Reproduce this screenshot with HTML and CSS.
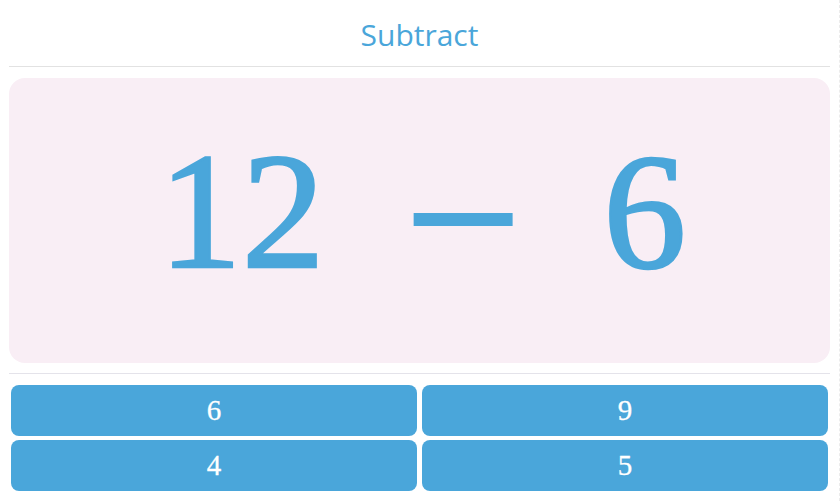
FILE: index.html
```html
<!DOCTYPE html>
<html lang="en">
<head>
<meta charset="utf-8">
<title>Subtract</title>
<link rel="stylesheet" href="styles.css">
</head>
<body>
<div class="page">
  <div class="app">
    <header class="header"><h1 class="title">Subtract</h1></header>
    <section class="problem">
      <span class="term">12</span>
      <span class="op">−</span>
      <span class="term six">6</span>
    </section>
    <hr class="divider">
    <section class="answers">
      <button class="answer">6</button>
      <button class="answer">9</button>
      <button class="answer">4</button>
      <button class="answer">5</button>
    </section>
  </div>
</div>
</body>
</html>
```
FILE: styles.css
```css
html, body {
  margin: 0;
  padding: 0;
  background: #ffffff;
}
.page {
  width: 839px;
  height: 501px;
  border-right: 1px dashed #ececec;
  overflow: hidden;
}
.app {
  width: 821px;
  margin-left: 9px;
}
.header {
  padding-top: 14px;
  padding-bottom: 11px;
  border-bottom: 1px solid #e2e2e2;
  text-align: center;
}
.title {
  margin: 0;
  font-family: "Open Sans", sans-serif;
  font-weight: 400;
  font-size: 30px;
  line-height: 41px;
  color: #4aa6da;
}
.problem {
  margin-top: 11px;
  height: 285px;
  box-sizing: border-box;
  padding-top: 50px;
  padding-left: 6px;
  background: #f9eef5;
  border-radius: 16px;
  display: flex;
  justify-content: center;
  align-items: flex-start;
  gap: 72px;
  color: #4aa6da;
}
.term {
  font-family: "Liberation Serif", "Times New Roman", serif;
  font-size: 166px;
  line-height: 166px;
  -webkit-text-stroke: 2.5px #4aa6da;
}
.six {
  margin-left: 2px;
}
.op {
  font-family: "DejaVu Sans", sans-serif;
  font-size: 158px;
  line-height: 158px;
  margin-top: 7px;
}
.divider {
  margin: 10px 0 11px;
  border: 0;
  height: 1px;
  background: #e4e3ea;
}
.answers {
  display: grid;
  grid-template-columns: 1fr 1fr;
  column-gap: 5px;
  row-gap: 4px;
  padding: 0 2px;
}
.answer {
  height: 51px;
  border: 0;
  border-radius: 8px;
  background: #4aa6da;
  color: #ffffff;
  font-family: "Liberation Serif", "Times New Roman", serif;
  font-size: 29px;
  padding: 0;
  -webkit-text-stroke: 0.3px #ffffff;
}
```
